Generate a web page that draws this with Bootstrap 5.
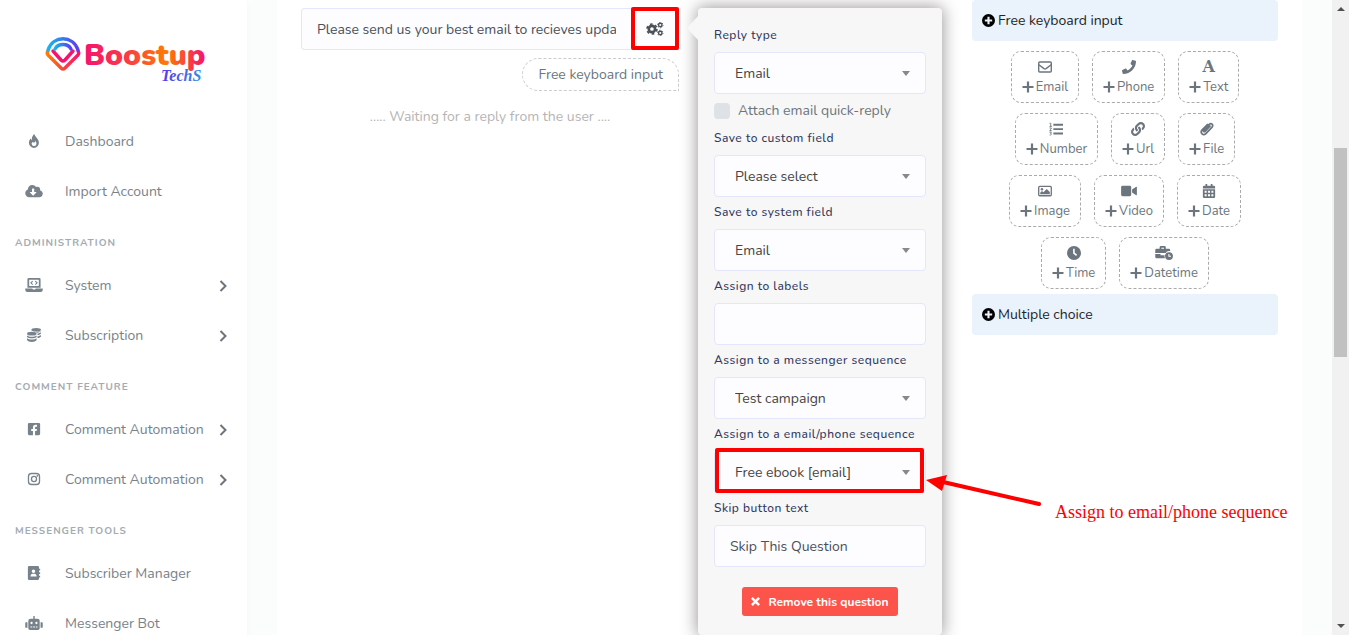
<!DOCTYPE html>
<html lang="en">
<head>
<meta charset="utf-8">
<meta name="viewport" content="width=device-width, initial-scale=1">
<title>Boostup Techs - Question editor</title>
<link href="https://cdn.jsdelivr.net/npm/bootstrap@5.3.0/dist/css/bootstrap.min.css" rel="stylesheet">
<style>
body{font-family:Nunito,"Open Sans","Noto Sans",sans-serif;font-size:14px;line-height:20px;color:#6c757d;background:#fbfdfc;overflow:hidden}
.ico{width:14px;height:14px;fill:currentColor;flex:none;overflow:visible}
.ico-wide{width:18px}
.line{fill:none;stroke:currentColor}
.app-side{width:247px;background:#fff;box-shadow:0 4px 8px rgba(0,0,0,.03)}
.brand{height:117px;padding-left:44px}
.side-link{height:50px;padding-left:25px;padding-right:18px;color:#78828a;text-decoration:none;font-size:14px}
.side-link .pic{width:18px;margin-right:22px;display:flex;justify-content:center;padding-bottom:2px}
.side-link .chev{width:12px;height:12px;color:#6c757d}
.side-head{height:44px;padding:20px 15px 0;font-size:10px;font-weight:700;letter-spacing:1px;color:#a3abb2;text-transform:uppercase;margin:0}
.sheet{background:#fff;margin:0 30px;padding:0 24px;min-width:0}
.chat{padding-top:8px;min-width:0}
.field{height:42px;border:1px solid #e4e6fc;border-radius:4px;background:#fdfdff;color:#495057;font-size:14px;padding:0 15px}
.field:focus{box-shadow:none}
.pick{padding-left:20px;padding-right:40px;color:#444;background:#fdfdff url("data:image/svg+xml,%3Csvg xmlns='http://www.w3.org/2000/svg' viewBox='0 0 8 5'%3E%3Cpath d='M0 0h8L4 5z' fill='%23888'/%3E%3C/svg%3E") no-repeat right 15px center/8px 5px}
.gear{width:48px;height:42px;border:1px solid #e4e6fc;background:#fdfdff;color:#495057}
.frame{position:absolute;border:4px solid #f00;border-radius:2px;pointer-events:none;z-index:6}
.frame-gear{inset:-1px 0 0 0}
.frame-pick{inset:-3px 2px 0 1px}
.answer{border:1px dashed #ccc;border-radius:20px 20px 0 20px;padding:6px 15px;height:33px;line-height:20px}
.waiting{color:#b5b5b5;margin-top:16px}
.tip{width:244px;height:627px;margin:8px 30px 0 19px;padding:16px;background:#f7f7f7;border-radius:4px;box-shadow:0 0 16px 1px rgba(60,50,50,.5);position:relative;flex:none}
.tip-arrow{position:absolute;left:-11px;top:8px;border:solid transparent;border-width:12px 11px 12px 0;border-right-color:#f7f7f7}
.group{margin-bottom:4px}
.group label.cap{display:block;font-size:12px;font-weight:500;letter-spacing:.5px;line-height:22px;margin-bottom:6px;color:#34395e;white-space:nowrap}
.group label.opt{line-height:25px}
.tick{appearance:none;width:16px;height:16px;border-radius:4px;background:#dee2e6;margin:0 8px 0 0}
.remove{height:29px;padding:0 8px;background:#fc544b;color:#fff;font-size:12px;font-weight:700;border-radius:3px}
.remove .ico{width:9px;height:9px;margin-right:8px}
.palette{width:306px;flex:none}
.bar{height:41px;background:#eaf2fb;border-radius:4px;padding:0 10px;color:#212529;border:0;text-align:left}
.bar .ico{width:13px;height:13px;color:#000;margin-right:3px}
.tiles{gap:10px 13px;padding:10px 24px 5px}
.tile{border:1px dashed #aaa;border-radius:10px;background:#fff;color:#6c757d;height:52px;padding:5px 10px;font-size:13px;line-height:20px}
.tile .top{height:20px}
.tile .plus{width:12px;height:12px;margin-right:2px}
.letter{font-family:"DejaVu Serif",serif;font-weight:700;font-size:16px}
.pointer{position:absolute;left:212px;bottom:-29px;z-index:7;display:flex;color:#f00}
.pointer svg{width:116px;height:34px;flex:none}
.pointer span{font-family:"Liberation Serif",serif;font-size:18px;white-space:nowrap;margin:28px 0 0 13px;line-height:20px}
.rail{width:17px;background:#f1f1f1;flex:none}
.rail i{width:13px;background:#c1c1c1}
.rail svg{width:8px;height:16px;fill:#505050}
</style>
</head>
<body>
<svg class="d-none">
<symbol id="fire" viewBox="0 0 14 16"><path fill-rule="evenodd" d="M7.4 0C8 3.5 12.600 5.200 12.600 9.800A5.800 5.800 0 0 1 7 15.900 5.900 5.900 0 0 1 1.200 10C1.200 7.600 2.300 6.100 3.200 5.100c.5 1 .8 1.600 1.500 2.100C4.200 4.100 5.200 1.600 7.400 0zM7 13.700a2.700 2.700 0 0 0 2.800-2.700c0-1.300-.8-2-1.200-3-.6 1-1 1.700-1.700 2.200-.4-.4-.6-.8-.8-1.400C4.700 9.700 4.300 10.300 4.300 11.200A2.700 2.700 0 0 0 7 13.700z"/></symbol>
<symbol id="cloud" viewBox="0 0 640 512"><path d="M537.6 226.6c4.100-10.700 6.400-22.400 6.400-34.600 0-53-43-96-96-96-19.700 0-38.100 6-53.300 16.200C367 64.200 315.300 32 256 32c-88.400 0-160 71.600-160 160 0 2.700.1 5.400.2 8.100C40.200 219.800 0 273.200 0 336c0 79.500 64.500 144 144 144h368c70.700 0 128-57.300 128-128 0-61.900-44-113.600-102.400-125.400zm-132.900 88.700L299.300 420.700c-6.200 6.200-16.400 6.200-22.600 0L171.300 315.300c-10.100-10.100-2.900-27.300 11.300-27.300H248V176c0-8.800 7.200-16 16-16h48c8.800 0 16 7.200 16 16v112h65.400c14.200 0 21.400 17.200 11.300 27.300z"/></symbol>
<symbol id="laptop" viewBox="0 0 20 16"><path fill-rule="evenodd" d="M4 0h12a1.500 1.500 0 0 1 1.500 1.500V11h-15V1.500A1.500 1.500 0 0 1 4 0zm.5 2v7h11V2zM0 12h8l.8 1h2.500l.7-1h8v1.500A2.500 2.500 0 0 1 17.500 16h-15A2.500 2.500 0 0 1 0 13.500z"/><path class="line" stroke-width="1.200" d="M8.500 3.500l-2 2 2 2m3-4l2 2-2 2"/></symbol>
<symbol id="coins" viewBox="0 0 16 16"><ellipse cx="10.500" cy="2" rx="5.500" ry="2"/><ellipse cx="5.500" cy="6.500" rx="5.500" ry="2.200"/><path d="M0 8.500c2 1.900 9 1.900 11 0v1.700c-1.500 2.100-9.500 2.100-11 0zM0 11.700c2 1.900 9 1.900 11 0v2c-1.500 3-9.500 3-11 0zM12 6.300c1.500-.2 3.200-.7 4-1.500v1.400c-.5.9-2 1.600-4 1.900zM12 9.500c1.500-.2 3.200-.7 4-1.500v1.600c-.5.9-2 1.600-4 1.900zM5 3.500l1-1C8 5 14 4.600 16 3.200c-.3 1.300-2 2-4.500 2.200C10 4 7.500 3.600 5 3.500z"/></symbol>
<symbol id="fb" viewBox="0 0 448 512"><path d="M400 32H48A48 48 0 0 0 0 80v352a48 48 0 0 0 48 48h137.250V327.690h-63V256h63v-54.640c0-62.150 37-96.480 93.670-96.480 27.140 0 55.520 4.840 55.520 4.840v61h-31.270c-30.810 0-40.420 19.120-40.420 38.730V256h68.780l-11 71.690h-57.780V480H400a48 48 0 0 0 48-48V80a48 48 0 0 0-48-48z"/></symbol>
<symbol id="insta" viewBox="0 0 16 16"><rect class="line" x="1.700" y="1.700" width="12.600" height="12.600" rx="3.500" stroke-width="1.500"/><circle class="line" cx="8" cy="8" r="2.900" stroke-width="1.500"/><circle cx="11.800" cy="4.300" r="1"/></symbol>
<symbol id="book" viewBox="0 0 14 16"><path fill-rule="evenodd" d="M1.500 0h9.700a1.500 1.500 0 0 1 1.500 1.500V3H14v2h-1.300v2H14v2h-1.300v2H14v2h-1.300v1.500a1.500 1.500 0 0 1-1.500 1.500H1.500A1.500 1.500 0 0 1 0 14.500v-13A1.500 1.500 0 0 1 1.500 0zm4.900 4a2 2 0 1 0 0 4 2 2 0 0 0 0-4zM3 12h7c0-2.200-1.200-3.200-2.200-3.200H5.200C4.200 8.800 3 9.800 3 12z"/></symbol>
<symbol id="robot" viewBox="0 0 20 16"><path fill-rule="evenodd" d="M9.200 0h1.600v3H14a2.500 2.500 0 0 1 2.500 2.500V14a2 2 0 0 1-2 2h-9a2 2 0 0 1-2-2V5.500A2.500 2.500 0 0 1 6 3h3.200zM7.200 6.700a1.300 1.300 0 1 0 0 2.600 1.300 1.300 0 0 0 0-2.600zm5.600 0a1.300 1.300 0 1 0 0 2.600 1.300 1.300 0 0 0 0-2.600zM6 12v1.200h2V12zm3 0v1.200h2V12zm3 0v1.200h2V12zM1 7h1.500v6.500H1a1 1 0 0 1-1-1V8a1 1 0 0 1 1-1zm16.500 0H19a1 1 0 0 1 1 1v4.500a1 1 0 0 1-1 1h-1.500z"/></symbol>
<symbol id="chev" viewBox="0 0 12 12"><path class="line" stroke-width="2" d="M3.500 1l5 5-5 5"/></symbol>
<symbol id="cogs" viewBox="0 0 20 16"><circle class="line" cx="6.500" cy="8" r="3.600" stroke-width="3"/><circle class="line" cx="6.500" cy="8" r="5.700" stroke-width="1.900" stroke-dasharray="3 2.970"/><circle class="line" cx="16" cy="3.500" r="2" stroke-width="1.600"/><circle class="line" cx="16" cy="3.500" r="3.100" stroke-width="1" stroke-dasharray="1.620 1.620"/><circle class="line" cx="16" cy="12.500" r="2" stroke-width="1.600"/><circle class="line" cx="16" cy="12.500" r="3.100" stroke-width="1" stroke-dasharray="1.620 1.620"/></symbol>
<symbol id="pluscircle" viewBox="0 0 16 16"><path fill-rule="evenodd" d="M8 0a8 8 0 1 0 0 16A8 8 0 0 0 8 0zM6.700 3.500h2.600v3.200h3.200v2.600H9.300v3.200H6.700V9.300H3.500V6.700h3.200z"/></symbol>
<symbol id="plus" viewBox="0 0 12 12"><path d="M4.900 .5h2.200v4.400h4.400v2.200H7.100v4.400H4.900V7.100H.5V4.900h4.400z"/></symbol>
<symbol id="mail" viewBox="0 0 16 16"><rect class="line" x=".8" y="2.300" width="14.400" height="11.400" rx="1.200" stroke-width="1.600"/><path class="line" stroke-width="1.600" d="M1 5.500l5.800 4.300q1.200.8 2.400 0L15 5.500"/></symbol>
<symbol id="phone" viewBox="0 0 512 512"><path d="M493.400 24.600l-104-24c-11.300-2.600-22.900 3.300-27.500 13.900l-48 112c-4.200 9.800-1.400 21.300 6.900 28l60.600 49.600c-36 76.700-98.900 140.500-177.200 177.200l-49.600-60.600c-6.800-8.300-18.200-11.100-28-6.900l-112 48C3.900 366.500-2 378.100.6 389.400l24 104C27.100 504.200 36.700 512 48 512c256.100 0 464-207.500 464-464 0-11.200-7.700-20.900-18.600-23.400z"/></symbol>
<symbol id="list" viewBox="0 0 16 16"><path d="M5 2h11v2.200H5zM5 7h11v2.200H5zM5 12h11v2.200H5z"/><path class="line" stroke-width="1" d="M.6 1.500H2V5M.5 5h2.800M.6 6.800H2.500V8L.8 9.700H3M.5 11.500h2.200L1.700 13c1.800 0 1.500 2-.9 1.900"/></symbol>
<symbol id="chain" viewBox="0 0 512 512"><path d="M326.612 185.391c59.747 59.809 58.927 155.698.36 214.590-.11.12-.24.25-.36.37l-67.200 67.200c-59.270 59.270-155.699 59.262-214.960 0-59.270-59.260-59.270-155.700 0-214.960l37.106-37.106c9.840-9.840 26.786-3.300 27.294 10.606.648 17.722 3.826 35.527 9.690 52.721 1.986 5.822.567 12.262-3.783 16.612l-13.087 13.087c-28.026 28.026-28.905 73.660-1.155 101.960 28.024 28.579 74.086 28.749 102.325.51l67.200-67.190c28.191-28.191 28.073-73.757 0-101.830-3.701-3.694-7.429-6.564-10.341-8.569a16.037 16.037 0 0 1-6.947-12.606c-.396-10.567 3.348-21.456 11.698-29.806l21.054-21.055c5.521-5.521 14.182-6.199 20.584-1.731a152.482 152.482 0 0 1 20.522 17.197zM467.547 44.449c-59.261-59.262-155.690-59.270-214.960 0l-67.200 67.200c-.12.12-.25.25-.36.37-58.566 58.892-59.387 154.781.36 214.590a152.454 152.454 0 0 0 20.521 17.196c6.402 4.468 15.064 3.789 20.584-1.731l21.054-21.055c8.350-8.350 12.094-19.239 11.698-29.806a16.037 16.037 0 0 0-6.947-12.606c-2.912-2.005-6.640-4.875-10.341-8.569-28.073-28.073-28.191-73.639 0-101.830l67.200-67.190c28.239-28.239 74.300-28.069 102.325.51 27.750 28.300 26.872 73.934-1.155 101.960l-13.087 13.087c-4.350 4.350-5.769 10.790-3.783 16.612 5.864 17.194 9.042 34.999 9.690 52.721.509 13.906 17.454 20.446 27.294 10.606l37.106-37.106c59.271-59.259 59.271-155.699.001-214.959z"/></symbol>
<symbol id="clip" viewBox="0 0 16 16"><path class="line" stroke-width="2" stroke-linecap="round" d="M11.400 4.800l-5.700 5.900c-1 1-2.400-.4-1.500-1.400l6.400-6.600c2.200-2.200 5.100.8 3.200 3.100l-7.100 7.400c-3.100 3.100-7.100-.9-4.200-4.100l6-6.200"/></symbol>
<symbol id="image" viewBox="0 0 16 16"><rect class="line" x=".8" y="2.800" width="14.400" height="10.600" rx="1.200" stroke-width="1.500"/><circle cx="4.500" cy="6" r="1.400"/><path d="M2.500 11.800V10l2-2 1.700 1.500L10 5.800l3.500 3.300v2.700z"/></symbol>
<symbol id="video" viewBox="0 0 18 16"><rect y="2" width="11.500" height="12" rx="1.600"/><path d="M12.500 6.300L16.800 3.300Q18 2.700 18 4v8q0 1.300-1.200.7l-4.300-3z"/></symbol>
<symbol id="cal" viewBox="0 0 14 16"><path fill-rule="evenodd" d="M3 0h2v2h4V0h2v2h1.500A1.500 1.500 0 0 1 14 3.500V5H0V3.500A1.500 1.500 0 0 1 1.500 2H3zM0 6h14v8.500a1.500 1.500 0 0 1-1.500 1.500h-11A1.500 1.500 0 0 1 0 14.500zm2 1.800v2.100h2.300V7.800zm3.800 0v2.100h2.400V7.800zm3.900 0v2.100H12V7.800zM2 11.800v2.100h2.300v-2.100zm3.800 0v2.100h2.400v-2.100zm3.900 0v2.100H12v-2.100z"/></symbol>
<symbol id="clock" viewBox="0 0 16 16"><path fill-rule="evenodd" d="M8 0a8 8 0 1 0 0 16A8 8 0 0 0 8 0zM7 3h1.800v4.800l2.700 2-1.100 1.500L7 8.700z"/></symbol>
<symbol id="biz" viewBox="0 0 20 16"><path fill-rule="evenodd" d="M5 3V1.500A1.500 1.500 0 0 1 6.500 0h4A1.500 1.500 0 0 1 12 1.500V3h3.500A1.500 1.500 0 0 1 17 4.500V6c-2.500-.6-4.200.5-5 2H0V4.500A1.500 1.500 0 0 1 1.500 3zm2-1v1h3V2zM0 9h6v1.500h4.800c-.3 1.200-.2 2.500.3 3.500H1.500A1.500 1.500 0 0 1 0 12.500zM15.700 7a4.500 4.500 0 1 0 0 9 4.500 4.500 0 0 0 0-9zM15 9h1.200v2.200H18v1.200h-3z"/></symbol>
<symbol id="cross" viewBox="0 0 10 10"><path class="line" stroke-width="2.800" d="M1 1l8 8M9 1L1 9"/></symbol>
</svg>

<div class="d-flex vh-100 overflow-hidden">
  <aside class="app-side flex-shrink-0">
    <div class="brand d-flex align-items-center">
      <svg width="170" height="54" viewBox="0 -2 170 54" role="img" aria-label="Boostup Techs">
        <defs>
          <linearGradient id="gText"><stop offset="0" stop-color="#f5136f"/><stop offset=".35" stop-color="#fb3a45"/><stop offset=".68" stop-color="#ff7a05"/><stop offset="1" stop-color="#f5136f"/></linearGradient>
          <linearGradient id="gBlue"><stop offset="0" stop-color="#16b5ee"/><stop offset="1" stop-color="#5c3df0"/></linearGradient>
          <linearGradient id="gWarm"><stop offset="0" stop-color="#ff7a05"/><stop offset="1" stop-color="#f5136f"/></linearGradient>
          <linearGradient id="gTech"><stop offset="0" stop-color="#5a35e8"/><stop offset="1" stop-color="#328fe8"/></linearGradient>
        </defs>
        <g fill="none" stroke-width="3.400" stroke-linecap="round" stroke-linejoin="round">
          <path d="M9 17L17 26Q19 28 21 26L29 17" stroke="#f5136f"/>
          <path d="M34 17Q35.500 19 34 21L21 34Q19 36 17 34L4 21Q2.500 19 4 17" stroke="url(#gWarm)"/>
          <path d="M4 16C9 1 29 1 34 16" stroke="url(#gBlue)"/>
          <path d="M11 15C14 9 24 9 27 15" stroke="url(#gBlue)"/>
        </g>
        <text x="40" y="31" font-family="Nunito, sans-serif" font-weight="900" font-size="30" fill="url(#gText)">Boostup</text>
        <text x="117" y="47" font-family="Liberation Serif, serif" font-style="italic" font-weight="700" font-size="16" fill="url(#gTech)">TechS</text>
      </svg>
    </div>
    <nav>
      <a href="#" class="side-link d-flex align-items-center"><span class="pic"><svg class="ico"><use href="#fire"/></svg></span>Dashboard</a>
      <a href="#" class="side-link d-flex align-items-center"><span class="pic"><svg class="ico ico-wide"><use href="#cloud"/></svg></span>Import Account</a>
      <h6 class="side-head">Administration</h6>
      <a href="#" class="side-link d-flex align-items-center"><span class="pic"><svg class="ico ico-wide"><use href="#laptop"/></svg></span>System<svg class="ico chev ms-auto"><use href="#chev"/></svg></a>
      <a href="#" class="side-link d-flex align-items-center"><span class="pic"><svg class="ico"><use href="#coins"/></svg></span>Subscription<svg class="ico chev ms-auto"><use href="#chev"/></svg></a>
      <h6 class="side-head">Comment Feature</h6>
      <a href="#" class="side-link d-flex align-items-center"><span class="pic"><svg class="ico"><use href="#fb"/></svg></span>Comment Automation<svg class="ico chev ms-auto"><use href="#chev"/></svg></a>
      <a href="#" class="side-link d-flex align-items-center"><span class="pic"><svg class="ico"><use href="#insta"/></svg></span>Comment Automation<svg class="ico chev ms-auto"><use href="#chev"/></svg></a>
      <h6 class="side-head">Messenger Tools</h6>
      <a href="#" class="side-link d-flex align-items-center"><span class="pic"><svg class="ico"><use href="#book"/></svg></span>Subscriber Manager</a>
      <a href="#" class="side-link d-flex align-items-center"><span class="pic"><svg class="ico ico-wide"><use href="#robot"/></svg></span>Messenger Bot</a>
    </nav>
  </aside>

  <main class="sheet d-flex flex-grow-1">
    <section class="chat flex-grow-1">
      <div class="d-flex">
        <input class="field form-control rounded-end-0 border-end-0" type="text" aria-label="Question" value="Please send us your best email to recieves updates">
        <div class="position-relative flex-shrink-0">
          <button type="button" class="gear d-flex align-items-center justify-content-center" aria-label="Question settings"><svg class="ico ico-wide"><use href="#cogs"/></svg></button>
          <span class="frame frame-gear"></span>
        </div>
      </div>
      <div class="d-flex justify-content-end mt-2"><div class="answer">Free keyboard input</div></div>
      <p class="waiting text-center mb-0">..... Waiting for a reply from the user ....</p>
    </section>

    <section class="tip">
      <span class="tip-arrow"></span>
      <div class="group"><label class="cap" for="f1">Reply type</label><select id="f1" class="field pick form-select"><option>Email</option></select></div>
      <div class="group d-flex align-items-center"><input class="tick" type="checkbox" id="qr"><label for="qr" class="opt">Attach email quick-reply</label></div>
      <div class="group"><label class="cap" for="f2">Save to custom field</label><select id="f2" class="field pick form-select"><option>Please select</option></select></div>
      <div class="group"><label class="cap" for="f3">Save to system field</label><select id="f3" class="field pick form-select"><option>Email</option></select></div>
      <div class="group"><label class="cap" for="f4">Assign to labels</label><input id="f4" type="text" class="field form-control"></div>
      <div class="group"><label class="cap" for="f5">Assign to a messenger sequence</label><select id="f5" class="field pick form-select"><option>Test campaign</option></select></div>
      <div class="group"><label class="cap" for="f6">Assign to a email/phone sequence</label>
        <div class="position-relative">
          <select id="f6" class="field pick form-select"><option>Free ebook [email]</option></select>
          <span class="frame frame-pick"></span>
          <div class="pointer">
            <svg viewBox="0 0 116 34" aria-hidden="true"><path d="M17 8L113 30" stroke="#f00" stroke-width="4" stroke-linecap="round"/><path d="M0 6L21 1 16 17z" fill="#f00"/></svg>
            <span>Assign to email/phone sequence</span>
          </div>
        </div>
      </div>
      <div class="group"><label class="cap" for="f7">Skip button text</label><input id="f7" type="text" class="field form-control" value="Skip This Question"></div>
      <div class="text-center pt-3"><button type="button" class="remove btn d-inline-flex align-items-center"><svg class="ico"><use href="#cross"/></svg>Remove this question</button></div>
    </section>

    <section class="palette">
      <button type="button" class="bar d-flex align-items-center w-100"><svg class="ico"><use href="#pluscircle"/></svg>Free keyboard input</button>
      <div class="tiles d-flex flex-wrap justify-content-center">
        <button type="button" class="tile"><span class="top d-flex align-items-center justify-content-center"><svg class="ico"><use href="#mail"/></svg></span><span class="d-flex align-items-center"><svg class="ico plus"><use href="#plus"/></svg>Email</span></button>
        <button type="button" class="tile"><span class="top d-flex align-items-center justify-content-center"><svg class="ico"><use href="#phone"/></svg></span><span class="d-flex align-items-center"><svg class="ico plus"><use href="#plus"/></svg>Phone</span></button>
        <button type="button" class="tile"><span class="top letter d-flex align-items-center justify-content-center" aria-hidden="true">A</span><span class="d-flex align-items-center"><svg class="ico plus"><use href="#plus"/></svg>Text</span></button>
        <button type="button" class="tile"><span class="top d-flex align-items-center justify-content-center"><svg class="ico"><use href="#list"/></svg></span><span class="d-flex align-items-center"><svg class="ico plus"><use href="#plus"/></svg>Number</span></button>
        <button type="button" class="tile"><span class="top d-flex align-items-center justify-content-center"><svg class="ico"><use href="#chain"/></svg></span><span class="d-flex align-items-center"><svg class="ico plus"><use href="#plus"/></svg>Url</span></button>
        <button type="button" class="tile"><span class="top d-flex align-items-center justify-content-center"><svg class="ico"><use href="#clip"/></svg></span><span class="d-flex align-items-center"><svg class="ico plus"><use href="#plus"/></svg>File</span></button>
        <button type="button" class="tile"><span class="top d-flex align-items-center justify-content-center"><svg class="ico"><use href="#image"/></svg></span><span class="d-flex align-items-center"><svg class="ico plus"><use href="#plus"/></svg>Image</span></button>
        <button type="button" class="tile"><span class="top d-flex align-items-center justify-content-center"><svg class="ico ico-wide"><use href="#video"/></svg></span><span class="d-flex align-items-center"><svg class="ico plus"><use href="#plus"/></svg>Video</span></button>
        <button type="button" class="tile"><span class="top d-flex align-items-center justify-content-center"><svg class="ico"><use href="#cal"/></svg></span><span class="d-flex align-items-center"><svg class="ico plus"><use href="#plus"/></svg>Date</span></button>
        <button type="button" class="tile"><span class="top d-flex align-items-center justify-content-center"><svg class="ico"><use href="#clock"/></svg></span><span class="d-flex align-items-center"><svg class="ico plus"><use href="#plus"/></svg>Time</span></button>
        <button type="button" class="tile"><span class="top d-flex align-items-center justify-content-center"><svg class="ico ico-wide"><use href="#biz"/></svg></span><span class="d-flex align-items-center"><svg class="ico plus"><use href="#plus"/></svg>Datetime</span></button>
      </div>
      <button type="button" class="bar d-flex align-items-center w-100"><svg class="ico"><use href="#pluscircle"/></svg>Multiple choice</button>
    </section>
  </main>

  <div class="rail d-flex flex-column align-items-center" aria-hidden="true">
    <svg viewBox="0 0 8 16"><path d="M0 11l4-4 4 4z"/></svg>
    <span style="flex:132"></span><i style="flex:209"></i><span style="flex:262"></span>
    <svg viewBox="0 0 8 16"><path d="M0 5l4 4 4-4z"/></svg>
  </div>
</div>
<script src="https://cdn.jsdelivr.net/npm/bootstrap@5.3.0/dist/js/bootstrap.bundle.min.js"></script>
</body>
</html>
